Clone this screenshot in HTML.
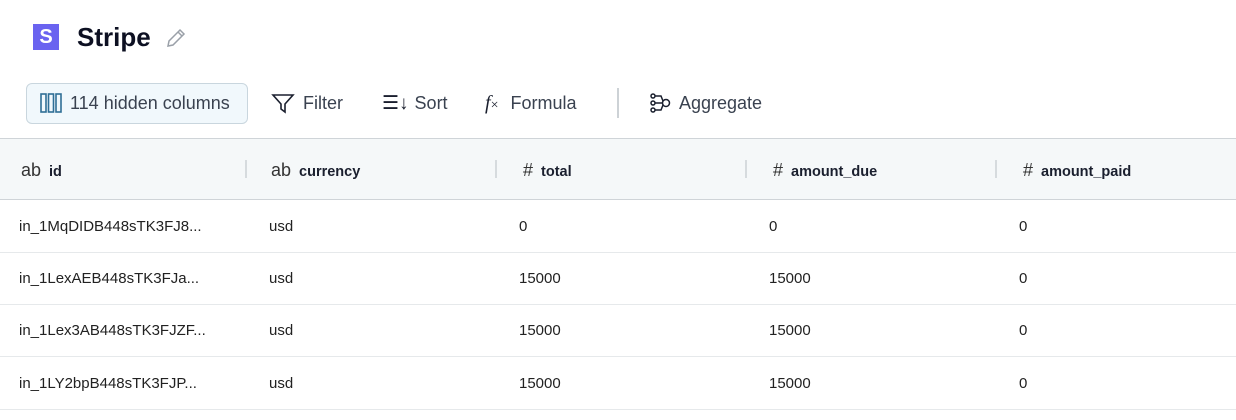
<!DOCTYPE html>
<html><head><style>
*{margin:0;padding:0;box-sizing:border-box}
body{width:1236px;height:420px;background:#fff;font-family:"Liberation Sans",sans-serif;color:#1a1f2e;position:relative;overflow:hidden}
.abs{position:absolute}
.logo{left:33px;top:24px;width:26px;height:26px;background:#6a63f0;color:#fff;font-weight:bold;font-size:20px;text-align:center;line-height:26px}
.title{left:77px;top:22px;font-size:26px;font-weight:bold;color:#0d1022}
.tb{top:92px;font-size:18px;color:#3a4250;display:flex;align-items:center;gap:8px}
.btn{left:26px;top:83px;width:222px;height:41px;background:#f1f8fc;border:1px solid #c9d6de;border-radius:6px}
.head{left:0;top:138px;width:1236px;height:62px;background:#f5f8f9;border-top:1px solid #cfd4d8;border-bottom:1px solid #cfd4d8}
.hc{top:160px;font-size:14.5px;font-weight:bold;color:#1a1f2e;display:flex;align-items:baseline;gap:8px}
.hc span.t{font-weight:normal;font-size:18px;color:#333}
.sep{top:160px;width:2px;height:18px;background:#d6dbde}
.row{left:0;width:1236px;border-bottom:1px solid #e6e9eb}
.c{font-size:15px;color:#222}
</style></head><body>
<div class="abs logo">S</div>
<div class="abs title">Stripe</div>
<svg class="abs" style="left:165px;top:27px" width="22" height="22" viewBox="0 0 22 22" fill="none" stroke="#9aa0a8" stroke-width="1.5"><path d="M3 19l1-5L15 3l4 4L8 18z M13 5l4 4"/></svg>
<div class="abs btn"></div>
<div class="abs tb" style="left:40px"><svg width="22" height="22" viewBox="0 0 22 22" fill="none" stroke="#2f6f96" stroke-width="1.6"><rect x="1" y="2" width="5" height="18"/><rect x="8.5" y="2" width="5" height="18"/><rect x="16" y="2" width="5" height="18"/></svg><span>114 hidden columns</span></div>
<div class="abs tb" style="left:271px"><svg width="24" height="22" viewBox="0 0 24 22" fill="none" stroke="#1a1f2e" stroke-width="1.6"><path d="M2 3h20l-8 9v8l-4-3v-5z"/></svg><span>Filter</span></div>
<div class="abs tb" style="left:382px;gap:6px"><span style="font-size:19px;color:#1a1f2e">☰↓</span><span>Sort</span></div>
<div class="abs tb" style="left:485px;gap:12px"><span style="font-family:'Liberation Serif',serif;font-style:italic;font-size:20px;color:#1a1f2e">f<span style="font-style:normal;font-size:14px">×</span></span><span>Formula</span></div>
<div class="abs" style="left:617px;top:88px;width:2px;height:30px;background:#cdd2d6"></div>
<div class="abs tb" style="left:650px;gap:7px"><svg width="22" height="22" viewBox="0 0 22 22" fill="none" stroke="#1a1f2e" stroke-width="1.5"><circle cx="3" cy="4" r="2"/><circle cx="3" cy="11" r="2"/><circle cx="3" cy="18" r="2"/><circle cx="16" cy="11" r="3.5"/><path d="M5 4h6l2 5M5 11h7.5M5 18h6l2-5"/></svg><span>Aggregate</span></div>
<div class="abs head"></div>
<div class="abs hc" style="left:21px"><span class="t">ab</span>id</div>
<div class="abs hc" style="left:271px"><span class="t">ab</span>currency</div>
<div class="abs hc" style="left:523px"><span class="t">#</span>total</div>
<div class="abs hc" style="left:773px"><span class="t">#</span>amount_due</div>
<div class="abs hc" style="left:1023px"><span class="t">#</span>amount_paid</div>
<div class="abs sep" style="left:245px"></div><div class="abs sep" style="left:495px"></div><div class="abs sep" style="left:745px"></div><div class="abs sep" style="left:995px"></div>
<div class="abs row" style="top:200px;height:53px"></div>
<div class="abs row" style="top:253px;height:52px"></div>
<div class="abs row" style="top:305px;height:52px"></div>
<div class="abs row" style="top:357px;height:53px"></div>
<div class="abs c" style="left:19px;top:218px">in_1MqDIDB448sTK3FJ8...</div><div class="abs c" style="left:269px;top:218px">usd</div><div class="abs c" style="left:519px;top:218px">0</div><div class="abs c" style="left:769px;top:218px">0</div><div class="abs c" style="left:1019px;top:218px">0</div>
<div class="abs c" style="left:19px;top:270px">in_1LexAEB448sTK3FJa...</div><div class="abs c" style="left:269px;top:270px">usd</div><div class="abs c" style="left:519px;top:270px">15000</div><div class="abs c" style="left:769px;top:270px">15000</div><div class="abs c" style="left:1019px;top:270px">0</div>
<div class="abs c" style="left:19px;top:322px">in_1Lex3AB448sTK3FJZF...</div><div class="abs c" style="left:269px;top:322px">usd</div><div class="abs c" style="left:519px;top:322px">15000</div><div class="abs c" style="left:769px;top:322px">15000</div><div class="abs c" style="left:1019px;top:322px">0</div>
<div class="abs c" style="left:19px;top:375px">in_1LY2bpB448sTK3FJP...</div><div class="abs c" style="left:269px;top:375px">usd</div><div class="abs c" style="left:519px;top:375px">15000</div><div class="abs c" style="left:769px;top:375px">15000</div><div class="abs c" style="left:1019px;top:375px">0</div>
</body></html>
